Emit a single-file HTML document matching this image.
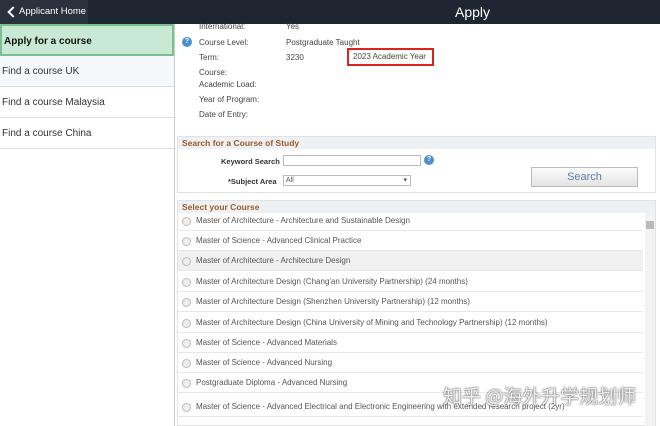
<!DOCTYPE html>
<html><head><meta charset="utf-8"><style>
*{margin:0;padding:0;box-sizing:border-box}
body{width:660px;height:426px;overflow:hidden;background:#fff;font-family:"Liberation Sans",Arial,sans-serif;position:relative}
.hdr{position:absolute;left:0;top:0;width:660px;height:24px;background:#1d2631}
.back{position:absolute;left:0;top:0;width:88px;height:24px;background:#28313c;color:#fff;font-size:9.5px;line-height:24px;padding-left:19px;white-space:nowrap}
.back:before{content:"";position:absolute;left:9px;top:8px;width:6px;height:6px;border-left:2px solid #fff;border-bottom:2px solid #fff;transform:rotate(45deg)}
.title{position:absolute;left:0;width:945px;top:0;text-align:center;color:#fff;font-size:14px;line-height:24px}
.side{position:absolute;left:0;top:24px;width:175px;height:402px;background:#fff;border-right:1px solid #ccc}
.side div{height:31px;line-height:31px;font-size:10px;color:#333;padding-left:2px;border-bottom:1px solid #ddd}
.side .act{background:#c8ead5;border:2px solid #7bbf93;font-weight:bold;color:#111;height:32px}
.side .uk{background:#f5f8fb}
.lbl{position:absolute;font-size:8px;color:#444;white-space:nowrap}
.q{position:absolute;width:10px;height:10px;border-radius:50%;background:#4a8fd1;color:#fff;font-size:7px;text-align:center;line-height:10px;font-weight:bold}
.box{position:absolute;border:1px solid #e2e2e2}
.bh{background:#eef1f4;color:#9a5a2a;font-size:8.5px;font-weight:bold;height:12px;line-height:12px;padding-left:4px}
.row{position:absolute;left:178px;width:465px;height:20px;border-bottom:1px solid #e8e8e8;font-size:8px;color:#555;line-height:20px;padding-left:18px;white-space:nowrap}
.row:before{content:"";position:absolute;left:4px;top:6px;width:7px;height:7px;border-radius:50%;border:1px solid #bbb;background:#eee}
</style></head><body>
<div class="hdr"><div class="back">Applicant Home</div><div class="title">Apply</div></div>
<div class="side"><div class="act">Apply for a course</div><div class="uk">Find a course UK</div><div>Find a course Malaysia</div><div>Find a course China</div></div>
<div class="lbl" style="left:199px;top:22px">International:</div><div class="lbl" style="left:286px;top:22px">Yes</div>
<div class="q" style="left:182px;top:37px">?</div>
<div class="lbl" style="left:199px;top:38px">Course Level:</div><div class="lbl" style="left:286px;top:38px">Postgraduate Taught</div>
<div class="lbl" style="left:199px;top:53px">Term:</div><div class="lbl" style="left:286px;top:53px">3230</div>
<div style="position:absolute;left:347px;top:48px;width:87px;height:18px;border:2px solid #d22;font-size:8px;color:#444;line-height:14px;padding-left:4px">2023 Academic Year</div>
<div class="lbl" style="left:199px;top:68px">Course:</div>
<div class="lbl" style="left:199px;top:80px">Academic Load:</div>
<div class="lbl" style="left:199px;top:95px">Year of Program:</div>
<div class="lbl" style="left:199px;top:110px">Date of Entry:</div>
<div class="box" style="left:177px;top:136px;width:479px;height:57px"><div class="bh">Search for a Course of Study</div></div>
<div class="lbl" style="left:221px;top:157px;font-weight:bold;color:#333;font-size:7.5px">Keyword Search</div>
<div style="position:absolute;left:283px;top:155px;width:138px;height:11px;border:1px solid #bbb"></div>
<div class="q" style="left:424px;top:155px">?</div>
<div class="lbl" style="left:228px;top:177px;font-weight:bold;color:#333;font-size:7.5px">*Subject Area</div>
<div style="position:absolute;left:283px;top:175px;width:128px;height:11px;border:1px solid #bbb;font-size:7px;color:#555;padding-left:2px;line-height:9px">All<span style="position:absolute;right:3px">▾</span></div>
<div style="position:absolute;left:531px;top:167px;width:107px;height:20px;border:1px solid #bbb;background:linear-gradient(#fbfbfb,#e4e4e4);color:#5a7fa8;font-size:11px;text-align:center;line-height:18px">Search</div>
<div class="box" style="left:177px;top:200px;width:479px;height:226px"><div class="bh">Select your Course</div></div>
<div style="position:absolute;left:645px;top:213px;width:10px;height:213px;background:#f2f2f2"><div style="margin:8px 1px;height:8px;background:#bbb"></div></div>
<div class="row" style="top:211px">Master of Architecture - Architecture and Sustainable Design</div>
<div class="row" style="top:231px">Master of Science - Advanced Clinical Practice</div>
<div class="row" style="top:251px;background:#f0f0f0">Master of Architecture - Architecture Design</div>
<div class="row" style="top:272px">Master of Architecture Design (Chang'an University Partnership) (24 months)</div>
<div class="row" style="top:292px">Master of Architecture Design (Shenzhen University Partnership) (12 months)</div>
<div class="row" style="top:313px">Master of Architecture Design (China University of Mining and Technology Partnership) (12 months)</div>
<div class="row" style="top:333px">Master of Science - Advanced Materials</div>
<div class="row" style="top:353px">Master of Science - Advanced Nursing</div>
<div class="row" style="top:373px">Postgraduate Diploma - Advanced Nursing</div>
<div class="row" style="top:397px">Master of Science - Advanced Electrical and Electronic Engineering with extended research project (2yr)</div>
<div style="position:absolute;left:443px;top:382px;font-family:'Noto Sans CJK SC',sans-serif;font-size:19px;color:rgba(255,255,255,0.9);text-shadow:0 0 2px #666,0 0 1px #444">知乎 @海外升学规划师</div>
</body></html>
